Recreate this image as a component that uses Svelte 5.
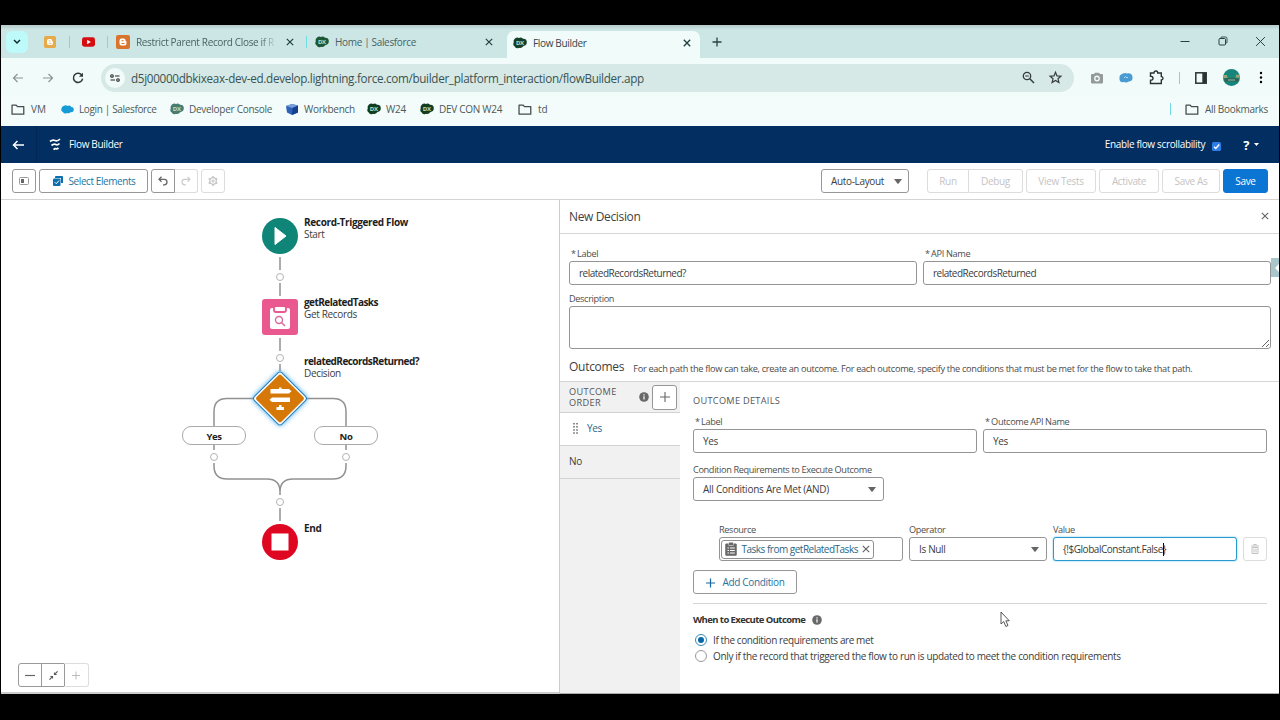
<script lang="ts">
	let label = $state('relatedRecordsReturned?');
	let apiName = $state('relatedRecordsReturned');
	let description = $state('');
	let outcomeLabel = $state('Yes');
	let outcomeApiName = $state('Yes');
	let when = $state('met');
	let scrollable = $state(true);

	const nodes = [
		{ name: 'Record-Triggered Flow', type: 'Start', cls: 'start' },
		{ name: 'getRelatedTasks', type: 'Get Records', cls: 'get' },
		{ name: 'relatedRecordsReturned?', type: 'Decision', cls: 'decision' },
		{ name: 'End', type: '', cls: 'end' }
	];
	const plusPoints = [
		[280, 77],
		[280, 158],
		[214, 257],
		[346, 257],
		[280, 302]
	];
</script>

{#snippet dx(fill: string)}
	<svg class="dx" width="14" height="12" viewBox="0 0 14 12">
		<path d="M2 1.500Q4 0 6 1Q8-.2 10 1.800Q13.500 1.500 13.800 5Q14 8.500 10.500 9Q8.500 11.500 6 10.700Q3 12.300 1.700 9.500Q-.5 8 .7 5.500Q0 3 2 1.500Z" {fill} />
		<text x="6.800" y="8.200" text-anchor="middle" font-size="6" font-weight="700" fill="#bfe0c8">DX</text>
	</svg>
{/snippet}

{#snippet blogger(fill: string, size: number)}
	<svg width={size} height={size} viewBox="0 0 14 14">
		<rect width="14" height="14" rx="2" {fill} />
		<path d="M5.500 3.500h2.200q1.800 0 1.800 2q0 1 1 1v2q0 2-2 2h-3q-2 0-2-2v-3q0-2 2-2Z" fill="#fff" />
		<path d="M5.500 5.700h2M5.500 8.500h3" stroke={fill} stroke-width="1" />
	</svg>
{/snippet}

{#snippet cross(size: number, w: number)}
	<svg width={size} height={size} viewBox="0 0 10 10">
		<path d="M1 1L9 9M9 1L1 9" stroke="currentColor" stroke-width={w} />
	</svg>
{/snippet}

{#snippet folder()}
	<svg class="folder" width="14" height="11" viewBox="0 0 15 12">
		<path d="M1 1.300h4.500l1.500 1.600h6.800v8.200H1Z" fill="none" stroke="#474b4b" stroke-width="1.400" stroke-linejoin="round" />
	</svg>
{/snippet}

{#snippet info()}
	<svg class="info" width="10" height="10" viewBox="0 0 10 10">
		<circle cx="5" cy="5" r="4.800" fill="#686868" />
		<path d="M5 4.300V7.600M5 2.200V3.400" stroke="#fff" stroke-width="1.200" />
	</svg>
{/snippet}

{#snippet caret()}
	<svg class="caret" width="8" height="5" viewBox="0 0 8 5"><path d="M0 0H8L4.600 4.500Q4 5 3.400 4.500Z" fill="#666" /></svg>
{/snippet}

<div class="screen">
	<div class="window">
		<div class="tabs">
			<button class="tab-search" aria-label="Search tabs">
				<svg width="8" height="6" viewBox="0 0 8 6"><path d="M1 1L4 4L7 1" fill="none" stroke="#102c2d" stroke-width="1.500" /></svg>
			</button>
			<div class="pinned">{@render blogger('#e6ab48', 12)}</div>
			<i class="sep"></i>
			<div class="pinned">
				<svg width="13" height="10" viewBox="0 0 14 10"><rect width="14" height="10" rx="2.500" fill="#d60d10" /><path d="M5.500 2.700L9.500 5L5.500 7.300Z" fill="#fff" /></svg>
			</div>
			<i class="sep"></i>
			<div class="tab first">
				{@render blogger('#d8742b', 14)}
				<span class="title fade">Restrict Parent Record Close if R</span>
				{@render cross(8, 1.5)}
			</div>
			<i class="sep"></i>
			<div class="tab second">
				{@render dx('#1d5734')}
				<span class="title">Home | Salesforce</span>
				{@render cross(8, 1.5)}
			</div>
			<div class="tab active">
				{@render dx('#153f28')}
				<span class="title">Flow Builder</span>
				{@render cross(8, 1.7)}
			</div>
			<svg class="new-tab" width="10" height="10" viewBox="0 0 10 10"><path d="M5 .5V9.500M.5 5H9.500" stroke="#274446" stroke-width="1.300" /></svg>
			<div class="controls">
				<svg width="10" height="10" viewBox="0 0 10 10"><path d="M.5 5.500H9.500" stroke="#263e40" /></svg>
				<svg width="10" height="10" viewBox="0 0 10 10"><rect x="1" y="2.500" width="6.500" height="6.500" rx="1" fill="none" stroke="#263e40" /><path d="M3 2.500V1.500Q3 1 3.500 1H7.500Q9 1 9 2.500V6.500Q9 7 8 7" fill="none" stroke="#263e40" stroke-width=".9" /></svg>
				{@render cross(11, 0.9)}
			</div>
		</div>

		<div class="nav">
			<div class="history">
				<svg width="12" height="12" viewBox="0 0 12 12"><path d="M11 6H2M5.500 2L1.500 6L5.500 10" fill="none" stroke="#8b9594" stroke-width="1.200" /></svg>
				<svg width="12" height="12" viewBox="0 0 12 12"><path d="M1 6H10M6.500 2L10.500 6L6.500 10" fill="none" stroke="#8b9594" stroke-width="1.200" /></svg>
				<svg width="12" height="12" viewBox="0 0 12 12"><path d="M10 3.500A4.600 4.600 0 1 0 10.600 6.600" fill="none" stroke="#303838" stroke-width="1.500" /><path d="M11 .7V4.800H6.900Z" fill="#303838" /></svg>
			</div>
			<div class="omnibox">
				<span class="site">
					<svg width="10" height="8" viewBox="0 0 10 8"><circle cx="2" cy="2" r="1.300" fill="none" stroke="#222" stroke-width="1.100" /><path d="M5 2H9.500M.5 6H5" stroke="#222" stroke-width="1.200" /><circle cx="8" cy="6" r="1.300" fill="none" stroke="#222" stroke-width="1.100" /></svg>
				</span>
				<span class="url">d5j00000dbkixeax-dev-ed.develop.lightning.force.com/builder_platform_interaction/flowBuilder.app</span>
				<svg width="13" height="13" viewBox="0 0 13 13"><circle cx="5" cy="5" r="3.700" fill="none" stroke="#333b3b" stroke-width="1.300" /><path d="M7.800 7.800L12 12" stroke="#333b3b" stroke-width="1.500" /><path d="M3.200 5H6.800" stroke="#333b3b" /></svg>
				<svg class="star" width="13" height="13" viewBox="0 0 13 13"><path d="M6.500 1.300L8 4.900L11.900 5.200L9 7.800L9.900 11.600L6.500 9.500L3.100 11.600L4 7.800L1.100 5.200L5 4.900Z" fill="none" stroke="#333b3b" stroke-width="1.200" /></svg>
			</div>
			<div class="extensions">
				<svg width="14" height="12" viewBox="0 0 14 12"><path d="M1 3Q1 2 2 2H4L5 .7H9L10 2H12Q13 2 13 3V10.500Q13 11.500 12 11.500H2Q1 11.500 1 10.500Z" fill="#949a9b" /><circle cx="7" cy="6.500" r="2.900" fill="#f2faf9" /><circle cx="7" cy="6.500" r="1.500" fill="#949a9b" /></svg>
				<svg width="14" height="10" viewBox="0 0 14 10"><path d="M3 1Q6-.5 8 .5Q13-.3 13.500 4Q14 8 10 8.500Q7 10 5 9Q0 10 .5 5Q.2 2 3 1Z" fill="#4a9bd2" /><path d="M5 5L6.500 3.500L8 5L9 4" stroke="#c5e7fa" stroke-width=".8" fill="none" /></svg>
				<svg width="15" height="15" viewBox="0 0 15 15"><path d="M1.500 3H5Q5 1 7 1Q8.700 1 8.700 3H12.300V6.600Q14 6.600 14 8.300Q14 10 12.300 10V13.500H1.500V10.300Q4 10.300 4 8.300Q4 6.300 1.500 6.300Z" fill="none" stroke="#2b3434" stroke-width="1.400" /></svg>
				<i class="sep"></i>
				<svg width="12" height="12" viewBox="0 0 12 12"><rect x=".8" y=".8" width="10.400" height="10.400" fill="none" stroke="#2b3434" stroke-width="1.500" /><path d="M7.300 1H11V11H7.300Z" fill="#2b3434" /></svg>
				<svg class="avatar" width="17" height="17" viewBox="0 0 17 17"><circle cx="8.500" cy="8.500" r="8.500" fill="#16857b" /><path d="M.5 6H4L4.500 9H.3ZM13 5.500L16.500 6V9L12.500 8.500Z" fill="#9ba571" /><path d="M1 10Q8 8 16 10L15 12.500H2Z" fill="#3b5e50" /><path d="M5 11H12" stroke="#76c9b8" /></svg>
				<svg width="4" height="13" viewBox="0 0 4 13"><circle cx="2" cy="2" r="1.200" /><circle cx="2" cy="6.500" r="1.200" /><circle cx="2" cy="11" r="1.200" /></svg>
			</div>
		</div>

		<div class="bookmarks">
			<span class="bm vm">{@render folder()}VM</span>
			<span class="bm login">
				<svg width="13" height="9" viewBox="0 0 13 9"><path d="M2.500 1Q5-.5 6.500 1Q9-.2 10.200 2Q13 2 12.800 5Q12.500 7.500 9.500 7.200Q8 9 6 8Q3 9.500 2 7Q-.3 6 .4 3.500Q.8 1.500 2.500 1Z" fill="#159bd5" /></svg>
				Login | Salesforce
			</span>
			<span class="bm console">{@render dx('#477c70')}Developer Console</span>
			<span class="bm bench">
				<svg width="12" height="11" viewBox="0 0 12 11"><path d="M0 2L6 0L12 1.500V8.500L6 11L1 8.500Z" fill="#2d62b9" /><path d="M0 2L6 0L12 1.500L6.500 4Z" fill="#77a0db" /><path d="M6.500 4L12 1.500V8.500L6 11Z" fill="#17408c" /></svg>
				Workbench
			</span>
			<span class="bm w24">{@render dx('#123d20')}W24</span>
			<span class="bm dev">{@render dx('#123d20')}DEV CON W24</span>
			<span class="bm td">{@render folder()}td</span>
			<span class="bm all"><i class="sep"></i>{@render folder()}All Bookmarks</span>
		</div>

		<header>
			<div class="back">
				<svg width="12" height="10" viewBox="0 0 12 10"><path d="M12 5H2M5.500 1L1.500 5L5.500 9" fill="none" stroke="#fff" stroke-width="1.500" /></svg>
			</div>
			<svg class="flow-icon" width="12" height="13" viewBox="0 0 12 13"><path d="M1 3.500Q3.500 1.500 6 2.500T11 1M2.500 7.500Q5 5.500 6.700 6.500T10.500 5.500M4.500 11.700Q6 10.300 7 10.800T9.500 10" fill="none" stroke="#fff" stroke-width="1.700" /></svg>
			<span class="app">Flow Builder</span>
			<label>
				<span>Enable flow scrollability</span>
				<input type="checkbox" bind:checked={scrollable} />
				<svg width="9" height="9" viewBox="0 0 9 9"><rect width="9" height="9" rx="1.500" fill="#2b7ce4" />{#if scrollable}<path d="M2 4.700L3.800 6.500L7.200 2.500" stroke="#fff" stroke-width="1.400" fill="none" />{/if}</svg>
			</label>
			<span class="help">?</span>
			<svg class="help-caret" width="5" height="3" viewBox="0 0 5 3"><path d="M0 0H5L2.500 3Z" fill="#fff" /></svg>
		</header>

		<div class="toolbar">
			<button class="btn icon" aria-label="Toggle toolbox">
				<svg width="10" height="8" viewBox="0 0 10 8"><rect x=".5" y=".5" width="9" height="7" rx="1" fill="none" stroke="#999" /><path d="M2 2H5V6H2Z" fill="#666" /></svg>
			</button>
			<button class="btn select">
				<svg width="10" height="10" viewBox="0 0 10 10"><path d="M3 0H9Q10 0 10 1V7H8V2H2V1Q2 0 3 0Z" fill="#0b6fae" /><rect y="2.500" width="7.500" height="7.500" rx="1" fill="#0b6fae" /><path d="M1.800 6.200L3.300 7.700L6 4.500" stroke="#fff" stroke-width="1" fill="none" /></svg>
				<span>Select Elements</span>
			</button>
			<div class="group">
				<button class="btn icon undo" aria-label="Undo"><svg width="10" height="10" viewBox="0 0 10 10"><path d="M3.500 .8L1 3.300L3.500 5.800M1 3.300H6.300Q9 3.300 9 6T6.300 8.800H5" fill="none" stroke="#666" stroke-width="1.300" /></svg></button>
				<button class="btn icon off redo" aria-label="Redo"><svg width="10" height="10" viewBox="0 0 10 10"><path d="M6.500 .8L9 3.300L6.500 5.800M9 3.300H3.700Q1 3.300 1 6T3.700 8.800H5" fill="none" stroke="#ccc" stroke-width="1.200" /></svg></button>
			</div>
			<button class="btn icon off" aria-label="Settings">
				<svg width="10" height="10" viewBox="0 0 10 10"><circle cx="5" cy="5" r="3.300" fill="none" stroke="#c4c4c4" stroke-width="1.200" /><circle cx="5" cy="5" r="1.200" fill="none" stroke="#c4c4c4" /><path d="M5 0V2M5 8V10M.7 2.500L2.300 3.400M7.700 6.600L9.300 7.500M.7 7.500L2.300 6.600M7.700 3.400L9.300 2.500" stroke="#c4c4c4" stroke-width="1.500" /></svg>
			</button>
			<button class="btn layout"><span>Auto-Layout</span>{@render caret()}</button>
			<div class="group">
				<button class="btn off run">Run</button>
				<button class="btn off debug">Debug</button>
			</div>
			<button class="btn off tests">View Tests</button>
			<button class="btn off activate">Activate</button>
			<button class="btn off save-as">Save As</button>
			<button class="btn save">Save</button>
		</div>

		<main>
			<div class="canvas">
				<svg class="links" width="560" height="494" viewBox="0 0 560 494">
					<g fill="none" stroke="#919191" stroke-width="1.500">
						<path d="M280 57V70M280 83V96M280 138V151M280 164V171" />
						<path d="M253 198.500H227Q214 198.500 214 211.500V227M307 198.500H333Q346 198.500 346 211.500V227" />
						<path d="M214 244V250M346 244V250M214 263V266Q214 279 227 279H267Q280 279 280 292V295M346 263V266Q346 279 333 279H293Q280 279 280 292V295M280 308V321" />
					</g>
					{#each plusPoints as [cx, cy]}
						<circle {cx} {cy} r="3.500" fill="#fff" stroke="#b3b3b3" />
					{/each}
					<circle cx="280" cy="36" r="18" fill="#0e8577" />
					<path d="M275 27.500V44.500L286 36Z" fill="#fff" stroke="#fff" stroke-linejoin="round" />
					<rect x="262" y="99" width="36" height="36" rx="3" fill="#e9588f" />
					<rect x="270" y="108" width="20" height="21" rx="2" fill="#fff" />
					<rect x="274" y="106" width="12" height="6" rx="2" fill="#fff" stroke="#e9588f" stroke-width="1.800" />
					<circle cx="279" cy="120" r="3.500" fill="none" stroke="#d9699a" stroke-width="1.400" />
					<path d="M281.500 122.500L285 126" stroke="#d9699a" stroke-width="1.500" />
					<g class="glow"><rect x="260.500" y="179" width="39" height="39" rx="3" transform="rotate(45 280 198.500)" fill="#fff" stroke="#2a7fb8" /></g>
					<rect x="262.500" y="181" width="35" height="35" rx="2" transform="rotate(45 280 198.500)" fill="#d67807" />
					<path d="M279 187.500H281.500V189H289L291.500 191.200L289 193.500H270.500V189H279ZM272 197.500H290V202H272L269.500 199.700ZM279 205H281.500V207H284V210H276.500V207H279Z" fill="#fff" />
					<circle cx="280" cy="342" r="18" fill="#de0620" />
					<rect x="271.500" y="333.500" width="17" height="17" fill="#fff" />
				</svg>
				{#each nodes as node}
					<div class="node {node.cls}">
						<b>{node.name}</b>
						<span>{node.type}</span>
					</div>
				{/each}
				<div class="branch yes">Yes</div>
				<div class="branch no">No</div>
				<div class="zoom">
					<button aria-label="Zoom out"><svg width="10" height="10" viewBox="0 0 10 10"><path d="M0 5.500H10" stroke="#666" stroke-width="1.200" /></svg></button>
					<button aria-label="Fit"><svg width="9" height="9" viewBox="0 0 10 10"><path d="M.5 9.500L3 7M9.500 .5L7 3" stroke="#555" stroke-width="1.300" /><path d="M1 5.500H4.500V9ZM5.500 1V4.500H9Z" fill="#555" /></svg></button>
					<button class="off" aria-label="Zoom in"><svg width="8" height="8" viewBox="0 0 8 8"><path d="M0 4.500H8M4 .5V8.500" stroke="#bbb" /></svg></button>
				</div>
			</div>

			<section class="panel">
				<div class="panel-head">
					<h2>New Decision</h2>
					<button aria-label="Close">{@render cross(8, 1.4)}</button>
				</div>
				<div class="fields">
					<div class="pair">
						<label class="field"><span><sup>*</sup>Label</span><input class="tight" bind:value={label} /></label>
						<label class="field"><span><sup>*</sup>API Name</span><input class="tight" bind:value={apiName} /></label>
					</div>
					<label class="field desc">
						<span>Description</span>
						<textarea bind:value={description}></textarea>
					</label>
					<div class="outcomes-title">
						<h3>Outcomes</h3>
						<p>For each path the flow can take, create an outcome. For each outcome, specify the conditions that must be met for the flow to take that path.</p>
					</div>
				</div>
				<div class="outcomes">
					<aside>
						<div class="order-head">
							<span>OUTCOME ORDER</span>
							{@render info()}
							<button aria-label="Add outcome"><svg width="10" height="10" viewBox="0 0 10 10"><path d="M0 5H10M5 0V10" stroke="#666" stroke-width="1.100" /></svg></button>
						</div>
						<div class="order-item current">
							<svg width="5" height="11" viewBox="0 0 5 11"><path d="M1 0V11M4 0V11" stroke="#666" stroke-width="1.500" stroke-dasharray="1.500 1.600" /></svg>
							Yes
						</div>
						<div class="order-item">No</div>
					</aside>
					<div class="details">
						<h4>OUTCOME DETAILS</h4>
						<div class="pair">
							<label class="field"><span><sup>*</sup>Label</span><input bind:value={outcomeLabel} /></label>
							<label class="field"><span><sup>*</sup>Outcome API Name</span><input bind:value={outcomeApiName} /></label>
						</div>
						<div class="field logic">
							<span>Condition Requirements to Execute Outcome</span>
							<div class="box">All Conditions Are Met (AND){@render caret()}</div>
						</div>
						<div class="condition">
							<div class="field resource">
								<span>Resource</span>
								<div class="box">
									<div class="pill">
										<svg width="12" height="14" viewBox="0 0 12 14"><path d="M.8 2H3V4H9V2H11.200V13.200H.8Z" fill="#686868" stroke="#686868" stroke-linejoin="round" /><path d="M3.700 .5H8.300V3H3.700Z" fill="#686868" /><path d="M2.500 6H4M5 6H9.800M2.500 8.500H4M5 8.500H9.800M2.500 11H4M5 11H9.800" stroke="#fff" /></svg>
										<span>Tasks from getRelatedTasks</span>
										{@render cross(8, 1.5)}
									</div>
								</div>
							</div>
							<div class="field operator"><span>Operator</span><div class="box">Is Null{@render caret()}</div></div>
							<div class="field value"><span>Value</span><div class="box focus">{'{!$GlobalConstant.False'}<i class="text-cursor"></i>{'}'}</div></div>
							<button class="btn icon off" aria-label="Delete">
								<svg width="8" height="10" viewBox="0 0 8 10"><path d="M0 2H8M2.700 1.500V.5H5.300V1.500M1 3.500H7V9.500H1ZM3 4.500V8.500M5 4.500V8.500" fill="none" stroke="#c2c2c2" /></svg>
							</button>
						</div>
						<button class="btn add"><svg width="9" height="9" viewBox="0 0 9 9"><path d="M0 5H9M4.500 .5V9.500" stroke="#16669b" stroke-width="1.200" /></svg><span>Add Condition</span></button>
						<hr />
						<div class="when-title"><b>When to Execute Outcome</b>{@render info()}</div>
						<label class="radio"><input type="radio" value="met" bind:group={when} /><i></i><span class="met">If the condition requirements are met</span></label>
						<label class="radio"><input type="radio" value="updated" bind:group={when} /><i></i><span class="updated">Only if the record that triggered the flow to run is updated to meet the condition requirements</span></label>
					</div>
				</div>
				<div class="side-handle"><svg width="4" height="8" viewBox="0 0 4 8"><path d="M4 0L0 4L4 8Z" fill="#fff" /></svg></div>
			</section>
		</main>
		<svg class="pointer" width="10" height="17" viewBox="0 0 10 17"><path d="M1 1V13L3.700 10.500L5.800 15.500L8 14.500L5.900 9.800H9.300Z" fill="#fff" stroke="#444" stroke-width=".9" /></svg>
	</div>
</div>

<style>
	:global(body) {
		background: #000;
		overflow: hidden;
	}

	.screen {
		box-sizing: border-box;
		width: 1280px;
		height: 720px;
		padding: 25px 1px 26px;
		background: #000;
		font-family: 'Open Sans', 'Noto Sans', sans-serif;
		font-size: 10px;
		letter-spacing: -0.34px;
		line-height: 12px;
		color: #3c3c3c;
	}

	.screen :global(*) {
		box-sizing: border-box;
	}

	.window {
		position: relative;
		display: flex;
		flex-direction: column;
		height: 669px;
		background: #fff;
	}

	svg {
		flex: none;
		display: block;
		overflow: visible;
	}

	button {
		display: flex;
		align-items: center;
		justify-content: center;
		padding: 0;
		background: none;
		border: none;
		font: inherit;
		letter-spacing: inherit;
		color: inherit;
	}

	.sep {
		flex: none;
		width: 1px;
		height: 12px;
		background: #72dbe3;
	}

	/* browser chrome */
	.tabs {
		display: flex;
		align-items: center;
		height: 33px;
		background: linear-gradient(#b6c9ca, #cce6e5 5px);
		color: #405d5e;
	}

	.tab-search {
		width: 22px;
		height: 22px;
		margin: 0 5px 0 5px;
		background: #bffafb;
		border-radius: 6px;
	}

	.pinned {
		display: flex;
		justify-content: center;
		width: 37px;
	}

	.pinned:nth-child(2) {
		width: 36px;
		padding-right: 2px;
	}

	.tab {
		display: flex;
		align-items: center;
		gap: 6px;
		height: 27px;
		color: #203f41;
	}

	.title {
		flex: 1;
		overflow: hidden;
		white-space: nowrap;
		color: #486365;
	}

	.fade {
		mask-image: linear-gradient(90deg, #000 88%, transparent);
	}

	.first {
		width: 198px;
		padding: 0 12px 0 8px;
	}

	.first .title {
		max-width: 145px;
		margin-right: 3px;
	}

	.second {
		width: 200px;
		padding: 0 14px 0 8px;
	}

	.active {
		align-self: flex-end;
		width: 193px;
		padding: 0 9px 4px 6px;
		border-radius: 7px 7px 0 0;
		background: #f1fbfa;
	}

	.active .title {
		color: #314648;
	}

	.new-tab {
		margin-left: 12px;
	}

	.controls {
		display: flex;
		gap: 27.5px;
		margin-left: auto;
		padding-right: 13px;
		color: #263e40;
	}

	.nav {
		display: flex;
		align-items: center;
		height: 39px;
		background: #f1fbfa;
	}

	.history {
		display: flex;
		gap: 18px;
		width: 100px;
		padding-left: 11px;
	}

	.omnibox {
		display: flex;
		align-items: center;
		width: 973px;
		height: 28px;
		padding: 0 12px 0 4px;
		border-radius: 14px;
		background: #d6e9e7;
	}

	.site {
		display: grid;
		place-items: center;
		width: 20px;
		height: 20px;
		border-radius: 50%;
		background: #f1fbfa;
	}

	.url {
		flex: 1;
		margin-left: 6px;
		padding-top: 1px;
		font-size: 11.7px;
		letter-spacing: -0.32px;
		color: #3b5352;
	}

	.star {
		margin-left: 14px;
	}

	.extensions {
		display: flex;
		flex: 1;
		align-items: center;
		justify-content: space-between;
		padding: 0 16px 0 16px;
	}

	.avatar {
		margin-right: 4px;
	}

	.bookmarks {
		display: flex;
		align-items: center;
		height: 29px;
		padding: 0 11px 5px 10px;
		background: #f3fcfb;
		letter-spacing: -0.28px;
		color: #4c5958;
	}

	.bm {
		display: flex;
		align-items: center;
		gap: 5px;
		white-space: nowrap;
	}

	.vm,
	.td {
		gap: 6px;
		letter-spacing: 0;
	}

	.vm {
		width: 50px;
	}

	.login {
		width: 109px;
		letter-spacing: -0.35px;
	}

	.console {
		width: 116px;
	}

	.bench {
		width: 81px;
		gap: 6px;
	}

	.w24 {
		width: 53px;
	}

	.dev {
		width: 98px;
	}

	.all {
		margin-left: auto;
		gap: 6px;
	}

	.all .sep {
		margin-right: 8px;
	}

	header {
		display: flex;
		align-items: center;
		height: 37px;
		background: #032e61;
		color: #fff;
	}

	.back {
		display: flex;
		align-items: center;
		width: 36px;
		height: 100%;
		padding-left: 11px;
		border-right: 1px solid #022552;
	}

	.flow-icon {
		margin: 0 8px 0 12px;
	}

	header label {
		display: flex;
		align-items: center;
		gap: 7px;
		margin-left: auto;
	}

	.app,
	header label span {
		padding-bottom: 1px;
	}

	header label svg {
		margin-top: 3px;
	}

	header input {
		display: none;
	}

	.help {
		margin-left: 22px;
		padding-top: 1px;
		font-size: 13px;
		font-weight: 700;
	}

	.help-caret {
		margin: 0 20px 0 5px;
	}

	/* builder toolbar */
	.toolbar {
		display: flex;
		align-items: center;
		gap: 3px;
		height: 37px;
		padding: 0 11px;
		border-bottom: 1px solid #d3d3d3;
	}

	.btn {
		height: 24px;
		border: 1px solid #979797;
		border-radius: 3px;
		white-space: nowrap;
	}

	.btn.icon {
		width: 24px;
	}

	.btn.off {
		border-color: #dcdcdc;
		color: #c4c4c4;
	}

	.select {
		width: 109px;
		gap: 6px;
		padding-left: 1px;
		letter-spacing: -0.42px;
		color: #27739f;
	}

	.group {
		display: flex;
	}

	.undo,
	.run {
		border-radius: 3px 0 0 3px;
	}

	.redo,
	.debug {
		border-left: none;
		border-radius: 0 3px 3px 0;
	}

	.btn.redo {
		width: 23px;
	}

	.layout {
		width: 88px;
		gap: 10px;
		margin: 0 15px 0 auto;
		padding-left: 3px;
	}

	.run {
		width: 42px;
	}

	.debug {
		width: 54px;
	}

	.tests {
		width: 70px;
	}

	.activate {
		width: 60px;
	}

	.save-as {
		width: 58px;
	}

	.btn.save {
		width: 45px;
		background: #0b75d3;
		border-color: #0b75d3;
		color: #fff;
	}

	main {
		display: flex;
		flex: 1;
		min-height: 0;
	}

	/* flow canvas, node places are the canvas content */
	.canvas {
		position: relative;
		width: 558px;
		border-bottom: 2px solid #ccc;
	}

	.links {
		position: absolute;
		left: -1px;
		top: 0;
	}

	.glow {
		filter: drop-shadow(0 0 2.5px #35a4ee);
	}

	.node {
		position: absolute;
		left: 303px;
		display: flex;
		flex-direction: column;
		white-space: nowrap;
	}

	.node b {
		color: #1d1d1d;
	}

	.start {
		top: 16px;
	}

	.get {
		top: 96px;
	}

	.decision {
		top: 155px;
	}

	.get b,
	.decision b {
		letter-spacing: -0.54px;
	}

	.end {
		top: 322px;
	}

	.branch {
		position: absolute;
		top: 226px;
		width: 64px;
		height: 19px;
		border: 1px solid #aaa;
		border-radius: 9px;
		background: #fff;
		line-height: 19px;
		font-weight: 700;
		font-size: 9.5px;
		text-align: center;
		color: #222;
	}

	.yes {
		left: 181px;
	}

	.no {
		left: 313px;
	}

	.zoom {
		position: absolute;
		left: 17px;
		bottom: 5px;
		display: flex;
	}

	.zoom button {
		width: 24px;
		height: 24px;
		margin-right: -1px;
		border: 1px solid #999;
	}

	.zoom button:first-child {
		border-radius: 3px 0 0 3px;
	}

	.zoom .off {
		width: 25px;
		border-color: #ddd;
		border-left: none;
		border-radius: 0 3px 3px 0;
	}

	/* decision panel */
	.panel {
		position: relative;
		display: flex;
		flex-direction: column;
		width: 720px;
		border-left: 1px solid #ccc;
		border-bottom: 1px solid #aaa;
	}

	.panel-head {
		display: flex;
		align-items: center;
		justify-content: space-between;
		height: 34px;
		padding: 0 10px 0 9px;
		border-bottom: 1px solid #d5d5d5;
		color: #666;
	}

	.panel-head button {
		margin-bottom: 2px;
	}

	h2,
	h3,
	h4,
	p {
		margin: 0;
		font-weight: 400;
	}

	h2,
	h3 {
		font-size: 12px;
		letter-spacing: -0.28px;
		color: #3f3f3f;
	}

	h2 {
		padding-top: 1px;
		letter-spacing: -0.36px;
	}

	.fields {
		height: 148px;
		padding: 13px 8px 0 9px;
		border-bottom: 1px solid #d5d5d5;
	}

	.pair {
		display: grid;
		grid-template-columns: 1fr 1fr;
		gap: 6px;
	}

	.field {
		display: block;
	}

	.field > span {
		display: block;
		height: 14px;
		padding-top: 1px;
		font-size: 9.2px;
		letter-spacing: -0.36px;
		white-space: nowrap;
		color: #4e4e4e;
	}

	sup {
		margin: 0 1.5px 0 2px;
		font-size: 9px;
		line-height: 0;
		vertical-align: 0;
	}

	.field input,
	.field textarea,
	.box {
		display: flex;
		align-items: center;
		width: 100%;
		height: 24px;
		padding: 0 9px;
		border: 1px solid #949494;
		border-radius: 3px;
		background: #fff;
		font: inherit;
		letter-spacing: inherit;
		color: #3c3c3c;
		white-space: nowrap;
	}

	.field input.tight {
		letter-spacing: -0.5px;
	}

	.desc {
		margin-top: 7px;
	}

	.field textarea {
		height: 43px;
	}

	.outcomes-title {
		display: flex;
		align-items: flex-start;
		gap: 9px;
		margin-top: 12px;
		white-space: nowrap;
	}

	.outcomes-title p {
		padding-top: 2px;
		font-size: 9.2px;
		letter-spacing: -0.31px;
		color: #4a4a4a;
	}

	.outcomes {
		display: flex;
		flex: 1;
	}

	aside {
		width: 120px;
		background: #f1f1f1;
	}

	.order-head {
		display: flex;
		align-items: center;
		height: 31px;
		padding: 0 3px 0 9px;
		border-bottom: 1px solid #d2d2d2;
		line-height: 11px;
		font-size: 9.2px;
		letter-spacing: 0.35px;
		color: #555;
	}

	.order-head span {
		flex: 1;
	}

	.order-head button {
		width: 25px;
		height: 25px;
		margin-left: 3px;
		border: 1px solid #969696;
		border-radius: 3px;
		background: #fff;
	}

	.order-item {
		display: flex;
		align-items: center;
		gap: 9px;
		height: 33px;
		padding: 0 9px 2px;
		border-bottom: 1px solid #d2d2d2;
	}

	.current {
		padding-left: 13px;
		background: #fff;
		color: #25648d;
	}

	.details {
		flex: 1;
		padding: 13px 12px 0 13px;
	}

	h4 {
		font-size: 9.2px;
		letter-spacing: 0.3px;
		margin-bottom: 8px;
		color: #555;
	}

	.logic {
		width: 191px;
		margin-top: 10px;
		letter-spacing: -0.25px;
	}

	.box .caret {
		margin-left: auto;
	}

	.logic .caret,
	.operator .caret {
		margin-right: -2px;
	}

	.condition {
		display: grid;
		grid-template-columns: 184px 138px 184px 24px;
		gap: 6px;
		align-items: end;
		margin: 22px 0 9px 26px;
	}

	.resource .box {
		padding: 0 1px;
	}

	.pill {
		display: flex;
		align-items: center;
		gap: 4.5px;
		height: 19px;
		padding: 0 3px;
		border: 1px solid #909090;
		border-radius: 3px;
		letter-spacing: -0.5px;
		color: #666;
	}

	.pill span {
		color: #2a6585;
	}

	.box.focus {
		border: 1.5px solid #299bd0;
		box-shadow: 0 0 2px #64bce6;
		letter-spacing: -0.46px;
	}

	.text-cursor {
		width: 1px;
		height: 13px;
		margin-right: -1px;
		background: #000;
	}

	.add {
		width: 104px;
		gap: 7px;
		padding-left: 1px;
		color: #27739f;
	}

	hr {
		height: 1px;
		margin: 9px 0 9px;
		border: none;
		background: #d5d5d5;
	}

	.when-title {
		display: flex;
		align-items: center;
		gap: 7px;
		height: 13px;
		margin-bottom: 6px;
		font-size: 9.5px;
		letter-spacing: -0.58px;
		color: #333;
	}

	.radio {
		display: flex;
		align-items: center;
		gap: 6px;
		height: 16px;
		padding-left: 2px;
		white-space: nowrap;
	}

	.met {
		letter-spacing: -0.41px;
	}

	.radio input {
		display: none;
	}

	.radio i {
		display: grid;
		place-items: center;
		width: 12px;
		height: 12px;
		border: 1px solid #999;
		border-radius: 50%;
	}

	.radio input:checked + i {
		border-color: #3587bd;
	}

	.radio input:checked + i::after {
		content: '';
		width: 6px;
		height: 6px;
		border-radius: 50%;
		background: #0868a7;
	}

	.side-handle {
		position: absolute;
		right: 0;
		top: 58px;
		display: flex;
		align-items: center;
		justify-content: flex-end;
		width: 8px;
		height: 19px;
		background: #a9c6cb;
	}

	.pointer {
		position: absolute;
		left: 999px;
		top: 586px;
	}
</style>
